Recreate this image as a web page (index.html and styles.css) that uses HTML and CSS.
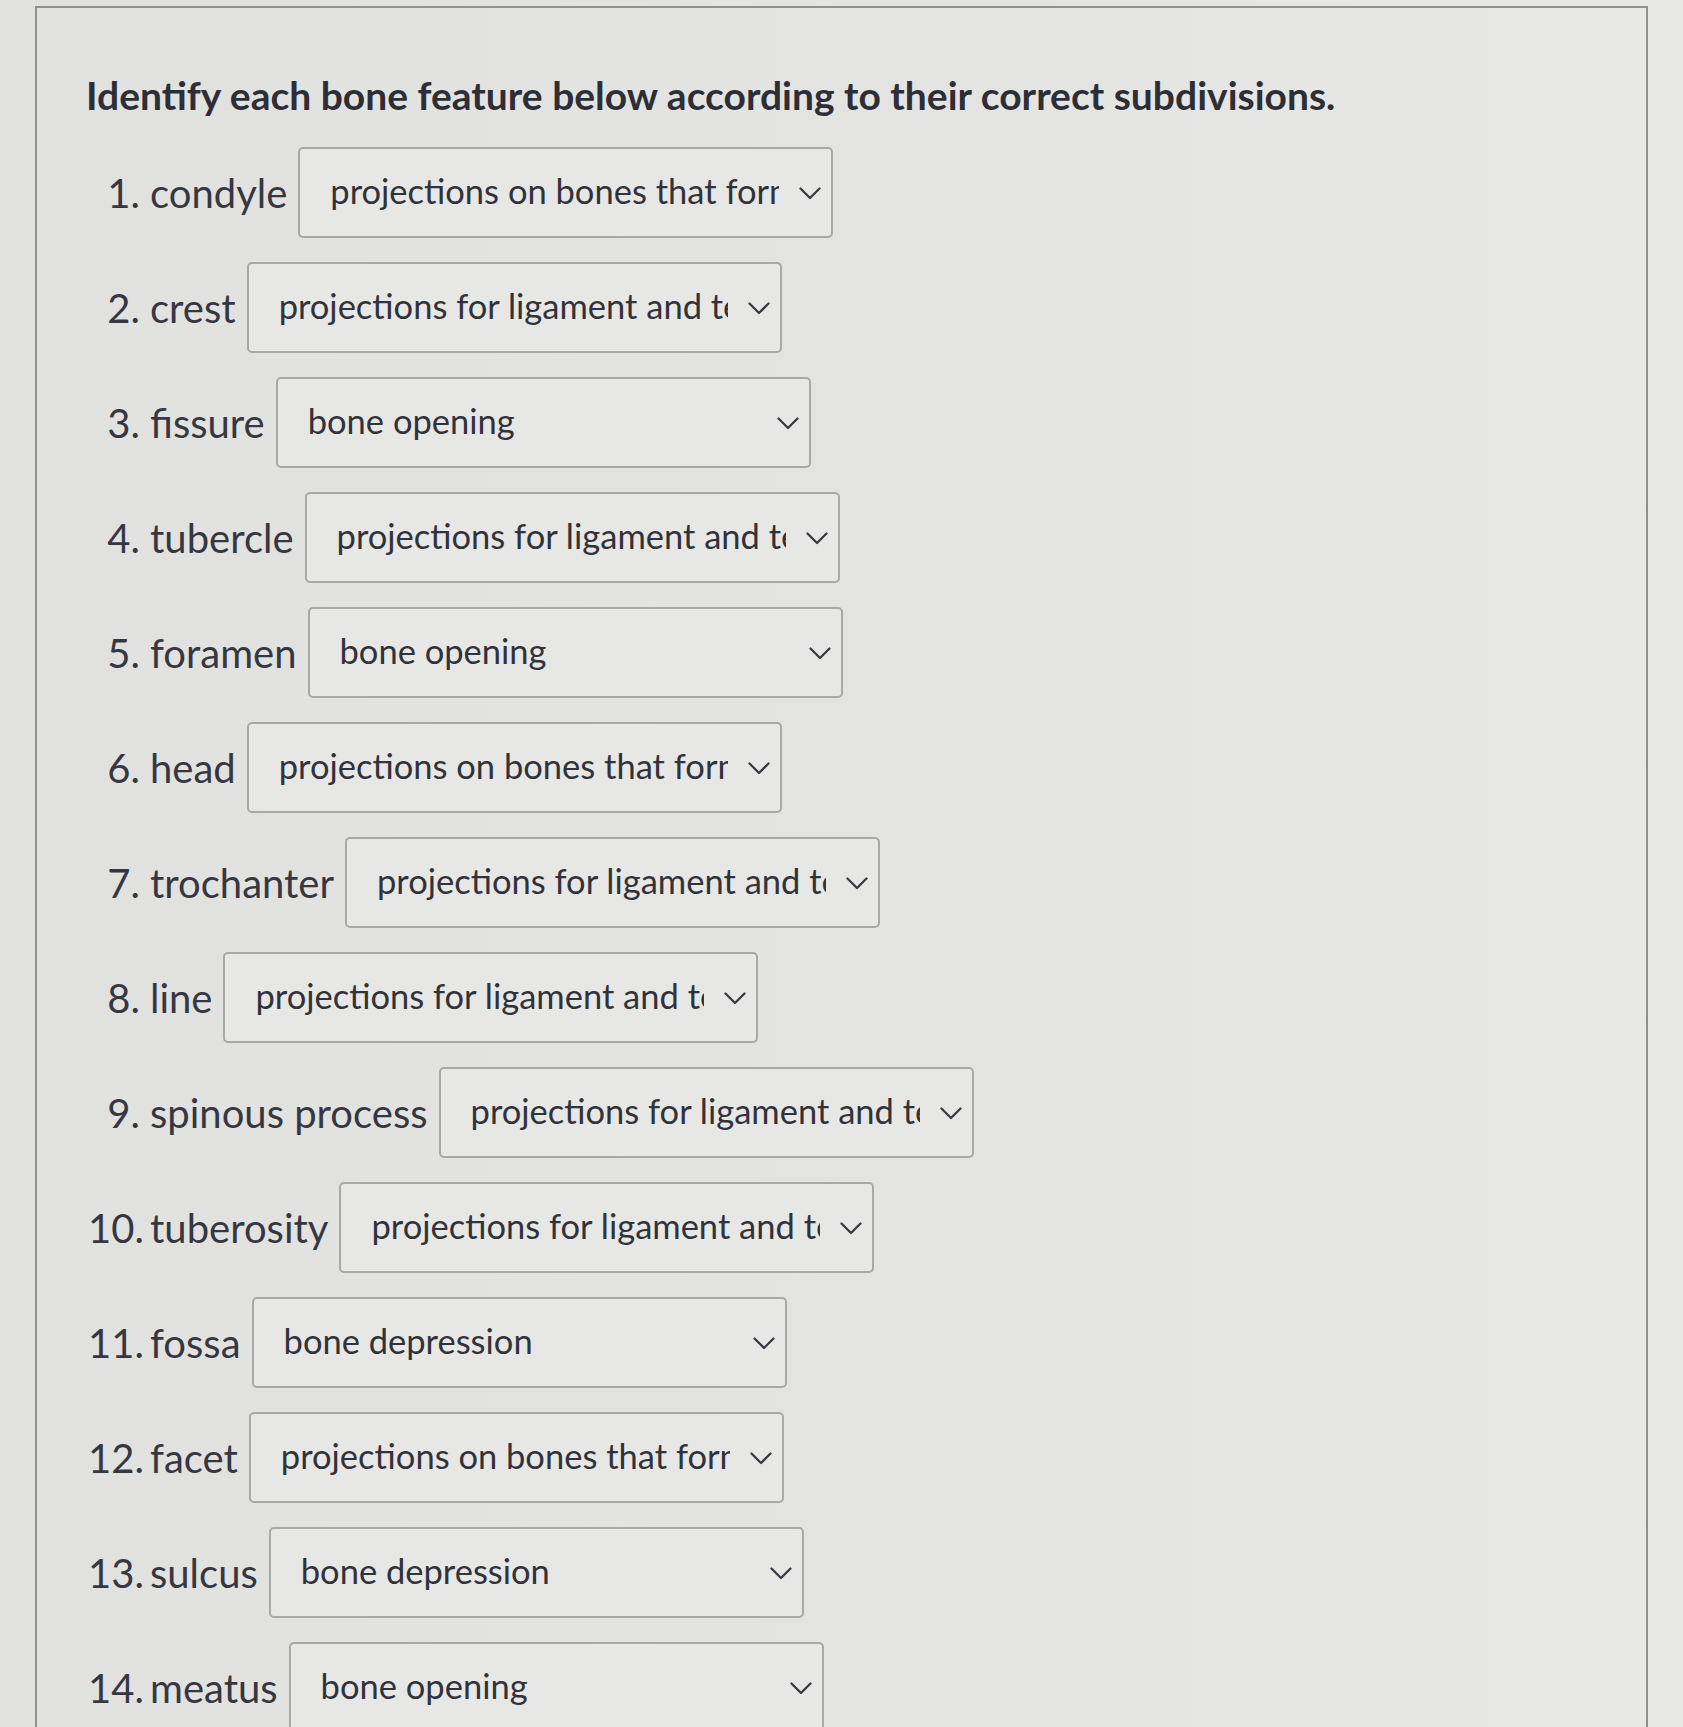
FILE: index.html
```html
<!DOCTYPE html>
<html lang="en">
<head>
<meta charset="utf-8">
<title>Bone features</title>
<link rel="stylesheet" href="styles.css">
</head>
<body>
<div class="panel">
  <h1 class="title">Identify each bone feature below according to their correct subdivisions.</h1>
  <div class="rows">
    <div class="row"><span class="num">1.</span><span class="name">condyle</span><div class="select"><span class="value">projections on bones that form joints</span><svg class="chev" viewBox="0 0 22 13"><path d="M1.5 1.5 L11 11 L20.5 1.5"/></svg></div></div>
    <div class="row"><span class="num">2.</span><span class="name">crest</span><div class="select"><span class="value">projections for ligament and tendon attachment</span><svg class="chev" viewBox="0 0 22 13"><path d="M1.5 1.5 L11 11 L20.5 1.5"/></svg></div></div>
    <div class="row"><span class="num">3.</span><span class="name">fissure</span><div class="select"><span class="value">bone opening</span><svg class="chev" viewBox="0 0 22 13"><path d="M1.5 1.5 L11 11 L20.5 1.5"/></svg></div></div>
    <div class="row"><span class="num">4.</span><span class="name">tubercle</span><div class="select"><span class="value">projections for ligament and tendon attachment</span><svg class="chev" viewBox="0 0 22 13"><path d="M1.5 1.5 L11 11 L20.5 1.5"/></svg></div></div>
    <div class="row"><span class="num">5.</span><span class="name">foramen</span><div class="select"><span class="value">bone opening</span><svg class="chev" viewBox="0 0 22 13"><path d="M1.5 1.5 L11 11 L20.5 1.5"/></svg></div></div>
    <div class="row"><span class="num">6.</span><span class="name">head</span><div class="select"><span class="value">projections on bones that form joints</span><svg class="chev" viewBox="0 0 22 13"><path d="M1.5 1.5 L11 11 L20.5 1.5"/></svg></div></div>
    <div class="row"><span class="num">7.</span><span class="name">trochanter</span><div class="select"><span class="value">projections for ligament and tendon attachment</span><svg class="chev" viewBox="0 0 22 13"><path d="M1.5 1.5 L11 11 L20.5 1.5"/></svg></div></div>
    <div class="row"><span class="num">8.</span><span class="name">line</span><div class="select"><span class="value">projections for ligament and tendon attachment</span><svg class="chev" viewBox="0 0 22 13"><path d="M1.5 1.5 L11 11 L20.5 1.5"/></svg></div></div>
    <div class="row"><span class="num">9.</span><span class="name">spinous process</span><div class="select"><span class="value">projections for ligament and tendon attachment</span><svg class="chev" viewBox="0 0 22 13"><path d="M1.5 1.5 L11 11 L20.5 1.5"/></svg></div></div>
    <div class="row"><span class="num">10.</span><span class="name">tuberosity</span><div class="select"><span class="value">projections for ligament and tendon attachment</span><svg class="chev" viewBox="0 0 22 13"><path d="M1.5 1.5 L11 11 L20.5 1.5"/></svg></div></div>
    <div class="row"><span class="num">11.</span><span class="name">fossa</span><div class="select"><span class="value">bone depression</span><svg class="chev" viewBox="0 0 22 13"><path d="M1.5 1.5 L11 11 L20.5 1.5"/></svg></div></div>
    <div class="row"><span class="num">12.</span><span class="name">facet</span><div class="select"><span class="value">projections on bones that form joints</span><svg class="chev" viewBox="0 0 22 13"><path d="M1.5 1.5 L11 11 L20.5 1.5"/></svg></div></div>
    <div class="row"><span class="num">13.</span><span class="name">sulcus</span><div class="select"><span class="value">bone depression</span><svg class="chev" viewBox="0 0 22 13"><path d="M1.5 1.5 L11 11 L20.5 1.5"/></svg></div></div>
    <div class="row"><span class="num">14.</span><span class="name">meatus</span><div class="select"><span class="value">bone opening</span><svg class="chev" viewBox="0 0 22 13"><path d="M1.5 1.5 L11 11 L20.5 1.5"/></svg></div></div>
  </div>
</div>
</body>
</html>
```
FILE: styles.css
```css
html, body {
  margin: 0;
  padding: 0;
}
body {
  background: linear-gradient(90deg, #e1e2df 0%, #e4e5e2 60%, #e8e9e6 100%);
  font-family: Lato, "Open Sans", sans-serif;
  color: #363741;
  min-height: 1727px;
  overflow: hidden;
}
.panel {
  margin: 6px 0 0 35px;
  width: 1613px;
  min-height: 1721px;
  border-left: 2px solid #8f9090;
  border-right: 2px solid #8f9090;
  border-top: 2px solid #8f9090;
  box-sizing: border-box;
  padding: 63px 0 0 49px;
}
.title {
  margin: 0;
  font-size: 39px;
  line-height: 48px;
  font-weight: 700;
  color: #2d2e36;
}
.rows {
  margin-top: 28px;
  padding-left: 2px;
  display: flex;
  flex-direction: column;
  gap: 24px;
}
.row {
  display: flex;
  align-items: center;
  height: 91px;
}
.num {
  width: 52px;
  text-align: right;
  font-size: 40px;
}
.name {
  margin-left: 10px;
  font-size: 40px;
}
.select {
  margin-left: 11px;
  width: 535px;
  height: 91px;
  box-sizing: border-box;
  border: 2px solid #a7a8a8;
  border-radius: 5px;
  background: #e7e8e5;
  display: flex;
  align-items: center;
  padding-left: 30px;
  position: relative;
}
.value {
  font-size: 34.5px;
  color: #31323a;
  white-space: nowrap;
  overflow: hidden;
  width: 449px;
  margin-top: -4px;
}
.chev {
  position: absolute;
  right: 10px;
  top: 38px;
  width: 22px;
  height: 13px;
  fill: none;
  stroke: #3a3b42;
  stroke-width: 2.3;
  stroke-linecap: round;
  stroke-linejoin: round;
}
```
